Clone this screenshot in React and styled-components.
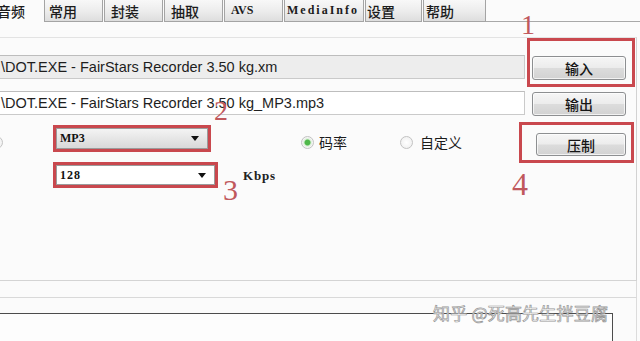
import React from 'react'
import styled, { createGlobalStyle } from 'styled-components'

const CJK = `"Noto Sans CJK SC", "Liberation Sans", sans-serif`
const BITMAP = `"Liberation Serif", "Noto Sans CJK SC", serif`

const GlobalStyle = createGlobalStyle`
  html, body {
    margin: 0;
    padding: 0;
    background: #fbfbfb;
  }
`

const Window = styled.div`
  position: relative;
  width: 640px;
  height: 341px;
  overflow: hidden;
  background: #fbfbfb;
  font-family: ${CJK};
  color: #1c1c1c;
`

const TabBar = styled.div`
  display: flex;
  height: 22px;
`

const Tab = styled.div`
  box-sizing: border-box;
  flex: 0 0 ${p => p.$w}px;
  height: 22px;
  margin-left: 1px;
  padding-left: ${p => p.$pad}px;
  display: flex;
  align-items: center;
  font-family: ${p => (p.$latin ? BITMAP : CJK)};
  font-size: ${p => (p.$latin ? '12px' : '14px')};
  font-weight: ${p => (p.$latin ? 700 : 500)};
  letter-spacing: ${p => p.$ls || 0}px;
  border: 1px solid #a4a4a4;
  border-top: none;
  background: linear-gradient(#f8f8f8, #ececec 55%, #dedede);

  ${p => p.$active && `
    margin-left: -3px;
    padding-left: 0;
    border: none;
    background: #fbfbfb;
  `}
`

const TabRest = styled.div`
  flex: 1;
  border-bottom: 1px solid #a8a8a8;
`

const Group = styled.div`
  box-sizing: border-box;
  margin-top: 15px;
  width: 637px;
  height: 244px;
  border-top: 1px solid #e3e3e3;
  border-right: 1px solid #d2d2d2;
  border-bottom: 1px solid #d4d4d4;
`

const FileGrid = styled.div`
  display: grid;
  grid-template-columns: 525px 108px;
  grid-template-rows: 49px 29px;
  column-gap: 2px;
`

const PathField = styled.div`
  box-sizing: border-box;
  height: 24px;
  margin-top: ${p => p.$top}px;
  display: flex;
  align-items: center;
  padding-left: 1px;
  font-family: "Liberation Sans", Arial, sans-serif;
  font-size: 14.5px;
  color: #1e1e1e;
  white-space: nowrap;
  overflow: hidden;
  background: ${p => (p.$readonly ? '#ededed' : '#ffffff')};
  border: 1px solid #cacaca;
  border-left: none;
  border-top-color: #bdbdbd;
`

const Mark = styled.div`
  position: relative;
  box-sizing: border-box;
  border: 3px solid #c9484e;
`

const InputMark = styled(Mark)`
  height: 49px;
  display: flex;
  align-items: flex-end;
  padding: 0 6px 4px 2px;
`

const EncodeMark = styled(Mark)`
  width: 115px;
  height: 41px;
  margin-top: 6px;
  padding: 8px 0 0 14px;
`

const ComboMark = styled(Mark)`
  width: ${p => p.$w}px;
  height: ${p => p.$h}px;
  margin-top: ${p => p.$top}px;
  display: flex;
`

const Num = styled.span`
  position: absolute;
  left: ${p => p.$x}px;
  top: ${p => p.$y}px;
  font-family: "Liberation Serif", "Times New Roman", serif;
  font-size: ${p => p.$size || 28}px;
  line-height: 1;
  color: #c0585d;
`

const Button = styled.div`
  box-sizing: border-box;
  width: ${p => p.$w || 94}px;
  height: ${p => p.$h || 24}px;
  margin: ${p => p.$m || 0};
  display: flex;
  align-items: center;
  justify-content: center;
  font-size: 14px;
  font-weight: 500;
  color: #151515;
  border: 1px solid #8d8f91;
  border-radius: 3px;
  background: linear-gradient(#f6f6f6 0%, #ececec 48%, #dcdcdc 52%, #d2d2d2 100%);
  box-shadow: inset 0 0 0 1px rgba(255, 255, 255, 0.7);
`

const OptionGrid = styled.div`
  display: grid;
  grid-template-columns: 53px 165px 1fr 117px;
  grid-template-rows: 44px 40px;
`

const Combo = styled.div`
  flex: 1;
  display: flex;
  align-items: center;
  justify-content: space-between;
  padding: 0 8px 0 3px;
  font-family: ${BITMAP};
  font-size: 12px;
  font-weight: 700;
  letter-spacing: ${p => (p.$flat ? '1px' : '0')};
  color: #111;
  border: 1px solid #9b9b9b;
  background: ${p => (p.$flat ? '#ffffff' : 'linear-gradient(#f4f4f4, #e6e6e6 50%, #d9d9d9)')};
`

const Arrow = styled.span`
  width: 0;
  height: 0;
  border-left: 4px solid transparent;
  border-right: 4px solid transparent;
  border-top: 5px solid #111;
`

const RateRow = styled.div`
  display: flex;
  align-items: center;
  height: 16px;
  margin-top: 18px;
  padding-left: ${p => p.$pad || 0}px;
  font-size: 14px;
`

const Radio = styled.span`
  box-sizing: border-box;
  flex: 0 0 13px;
  height: 13px;
  margin-left: ${p => p.$gap || 0}px;
  border-radius: 50%;
  border: 1px solid #c2c2c2;
  background: radial-gradient(circle, ${p => (p.$on ? '#4fb84a 0, #4fb84a 2.5px, #d9f0d6 3.5px, #f4f4f4 5px' : '#ffffff 0, #f3f3f3 5px')});
`

const RadioLabel = styled.span`
  margin-left: ${p => p.$gap}px;
  color: #1c1c1c;
`

const Unit = styled.span`
  margin: 8px 0 0 25px;
  font-family: ${BITMAP};
  font-size: 13px;
  font-weight: 700;
  letter-spacing: 0.8px;
  color: #222;
`

const Strip = styled.div`
  box-sizing: border-box;
  width: 637px;
  height: 17px;
  border-right: 1px solid #dcdcdc;
  border-bottom: 1px solid #d9d9d9;
`

const LogPanel = styled.div`
  position: relative;
  box-sizing: border-box;
  width: 637px;
  height: 44px;
  padding-top: 15px;
  border-right: 1px solid #dcdcdc;
`

const LogBox = styled.div`
  box-sizing: border-box;
  width: 613px;
  height: 40px;
  border-top: 1px solid #4c4c4c;
  border-right: 1px solid #4c4c4c;
  background: #fdfdfd;
`

const Watermark = styled.span`
  position: absolute;
  left: 433px;
  top: 6px;
  font-size: 17px;
  line-height: 1;
  white-space: nowrap;
  color: #fbfbfb;
  -webkit-text-stroke: 0.7px #959595;
  letter-spacing: 0.2px;
`

const TABS = [
  { label: '常用', w: 59, pad: 4 },
  { label: '封装', w: 59, pad: 6 },
  { label: '抽取', w: 59, pad: 6 },
  { label: 'AVS', w: 59, pad: 6, latin: true },
  { label: 'MediaInfo', w: 80, pad: 2, latin: true, ls: 2 },
  { label: '设置', w: 57, pad: 1 },
  { label: '帮助', w: 63, pad: 2 }
]

function App () {
  return (
    <>
      <GlobalStyle />
      <Window>
        <TabBar>
          <Tab $active $w={46}>音频</Tab>
          {TABS.map(t => (
            <Tab key={t.label} $w={t.w} $pad={t.pad} $latin={t.latin} $ls={t.ls}>{t.label}</Tab>
          ))}
          <TabRest />
        </TabBar>

        <Group>
          <FileGrid>
            <PathField $readonly $top={17}>\DOT.EXE - FairStars Recorder 3.50 kg.xm</PathField>
            <InputMark>
              <Num $x={-9} $y={-30}>1</Num>
              <Button>输入</Button>
            </InputMark>
            <PathField $top={4}>\DOT.EXE - FairStars Recorder 3.50 kg_MP3.mp3</PathField>
            <Button $m='5px 0 0 5px'>输出</Button>
          </FileGrid>

          <OptionGrid>
            <RateRow>
              <Radio $gap={-10} />
            </RateRow>
            <ComboMark $w={158} $h={27} $top={9}>
              <Num $x={158} $y={-31}>2</Num>
              <Combo>MP3<Arrow /></Combo>
            </ComboMark>
            <RateRow $pad={83}>
              <Radio $on />
              <RadioLabel $gap={5}>码率</RadioLabel>
              <Radio $gap={53} />
              <RadioLabel $gap={7}>自定义</RadioLabel>
            </RateRow>
            <EncodeMark>
              <Num $x={-10} $y={43} $size={32}>4</Num>
              <Button $w={90} $h={23}>压制</Button>
            </EncodeMark>
            <span />
            <ComboMark $w={165} $h={26} $top={2}>
              <Num $x={167} $y={10} $size={30}>3</Num>
              <Combo $flat>128<Arrow /></Combo>
            </ComboMark>
            <Unit>Kbps</Unit>
          </OptionGrid>
        </Group>

        <Strip />
        <LogPanel>
          <LogBox />
          <Watermark>知乎 @死高先生拌豆腐</Watermark>
        </LogPanel>
      </Window>
    </>
  )
}

export default App
